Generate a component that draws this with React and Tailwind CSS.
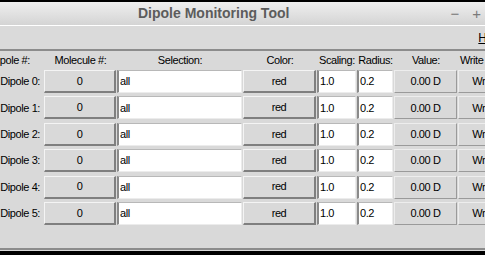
import React from "react";

const rows = [0, 1, 2, 3, 4, 5];

const cols = "grid grid-cols-[44px_73px_126px_74px_40px_37px_64px_52px]";

function RaisedButton({ children, className = "" }) {
  return (
    <div
      className={`h-full flex items-center justify-center bg-[#d9d9d9] border-t border-l border-t-[#f4f4f4] border-l-[#f4f4f4] border-b-2 border-r-2 border-b-[#7f7f7f] border-r-[#7f7f7f] ${className}`}
    >
      {children}
    </div>
  );
}

function Entry({ value }) {
  return (
    <div className="h-full flex items-center bg-white pl-[1px] border-l-2 border-l-[#8a8a8a] border-t border-t-[#b8b8b8] border-b border-r border-b-[#ececec] border-r-[#ececec]">
      {value}
    </div>
  );
}

function FlatButton({ children }) {
  return (
    <div className="h-full flex items-center justify-center bg-[#d9d9d9] border border-t-[#ededed] border-l-[#ededed] border-b-[#9a9a9a] border-r-[#9a9a9a]">
      {children}
    </div>
  );
}

export default function App() {
  return (
    <div
      className="w-[485px] h-[255px] overflow-hidden bg-[#d9d9d9] flex flex-col text-[11px] tracking-[-0.4px] text-black"
      style={{ fontFamily: '"Liberation Sans", Arial, sans-serif' }}
    >
      {/* top strip */}
      <div className="h-[2px] bg-black shrink-0" />

      {/* title bar */}
      <div className="h-[23px] shrink-0 flex items-center bg-gradient-to-b from-[#efefef] to-[#d4d4d4]">
        <div className="w-[138px] shrink-0" />
        <span className="text-[14px] font-bold tracking-normal text-[#5c5c5c] whitespace-nowrap">
          Dipole Monitoring Tool
        </span>
        <div className="flex-1" />
        <span className="text-[15px] text-[#7a7a7a] tracking-normal leading-none">−</span>
        <span className="text-[15px] text-[#7a7a7a] tracking-normal leading-none ml-[13px] mr-[4px]">+</span>
      </div>
      <div className="h-[1px] bg-white shrink-0" />

      {/* menu bar */}
      <div className="h-[23px] shrink-0 flex items-center justify-end bg-[#dadada]">
        <span className="text-[12px] underline tracking-normal mr-[-2px]">H</span>
      </div>
      <div className="h-[2px] bg-[#8c8c8c] shrink-0" />

      {/* header */}
      <div className={`${cols} h-[19px] shrink-0 items-center whitespace-nowrap`}>
        <div className="flex justify-end pr-[14px]">Dipole #:</div>
        <div className="text-center">Molecule #:</div>
        <div className="text-center">Selection:</div>
        <div className="text-center">Color:</div>
        <div className="text-center">Scaling:</div>
        <div className="text-center">Radius:</div>
        <div className="text-center">Value:</div>
        <div className="pl-[2px]">Write</div>
      </div>

      {/* rows */}
      <div className="flex flex-col gap-[3.4px] shrink-0">
        {rows.map((i) => (
          <div key={i} className={`${cols} h-[23px] whitespace-nowrap`}>
            <div className="flex items-center justify-end pr-[4px]">Dipole {i}:</div>
            <div className="pr-[1px]">
              <RaisedButton>0</RaisedButton>
            </div>
            <div className="pr-[1px]">
              <Entry value="all" />
            </div>
            <div className="pr-[1px]">
              <RaisedButton>red</RaisedButton>
            </div>
            <div className="pr-[1px]">
              <Entry value="1.0" />
            </div>
            <div className="pr-[1px]">
              <Entry value="0.2" />
            </div>
            <div className="pr-[1px]">
              <FlatButton>0.00 D</FlatButton>
            </div>
            <div>
              <FlatButton>Write</FlatButton>
            </div>
          </div>
        ))}
      </div>

      <div className="flex-1" />
      <div className="h-[2px] bg-[#8c8c8c] shrink-0" />
      <div className="h-[1px] bg-[#d9d9d9] shrink-0" />
      <div className="h-[4px] bg-black shrink-0" />
    </div>
  );
}
